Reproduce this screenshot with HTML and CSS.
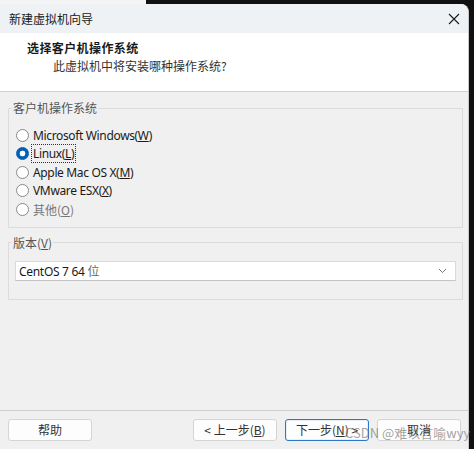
FILE: index.html
```html
<!DOCTYPE html>
<html>
<head>
<meta charset="utf-8">
<link rel="stylesheet" href="styles.css">
</head>
<body>
<div class="backdrop"></div>
<div class="window">
  <div class="titlebar">
    <span class="title">新建虚拟机向导</span>
    <svg class="close" width="12" height="12" viewBox="0 0 12 12"><path d="M1 1L11 11M11 1L1 11" stroke="#1a1a1a" stroke-width="1.1" fill="none"/></svg>
  </div>
  <div class="header">
    <div class="h-title">选择客户机操作系统</div>
    <div class="h-sub">此虚拟机中将安装哪种操作系统?</div>
  </div>
  <div class="body">
    <fieldset class="group os-group">
      <legend class="legend">客户机操作系统</legend>
      <div class="radios">
        <div class="radio"><span class="dot"></span><span class="lbl">Microsoft Windows(<u>W</u>)</span></div>
        <div class="radio"><span class="dot on"></span><span class="lbl focus">Linux(<u>L</u>)</span></div>
        <div class="radio"><span class="dot"></span><span class="lbl">Apple Mac OS X(<u>M</u>)</span></div>
        <div class="radio"><span class="dot"></span><span class="lbl">VMware ESX(<u>X</u>)</span></div>
        <div class="radio"><span class="dot"></span><span class="lbl cjk">其他(<u>O</u>)</span></div>
      </div>
    </fieldset>
    <fieldset class="group ver-group">
      <legend class="legend">版本(<u>V</u>)</legend>
      <div class="select">
        <span class="sel-text">CentOS 7 64 <span class="cjk">位</span></span>
        <svg class="chev" width="9" height="6" viewBox="0 0 9 6"><path d="M1 1L4.5 4.5L8 1" stroke="#777" stroke-width="1" fill="none"/></svg>
      </div>
    </fieldset>
    <div class="spacer"></div>
    <div class="footer">
      <button class="btn">帮助</button>
      <div class="nav">
        <button class="btn">&lt; 上一步(<u>B</u>)</button>
        <button class="btn primary">下一步(<u>N</u>) &gt;</button>
        <button class="btn">取消</button>
      </div>
    </div>
  </div>
</div>
<div class="watermark">CSDN @难以言喻wyy</div>
</body>
</html>
```
FILE: styles.css
```css
html, body {
  margin: 0;
  padding: 0;
  width: 474px;
  height: 449px;
  overflow: hidden;
  background: #111;
}
body {
  position: relative;
  font-family: "Noto Sans", "Noto Sans CJK SC", sans-serif;
  font-size: 12px;
  color: #1a1a1a;
}
.backdrop {
  position: absolute;
  left: 0;
  top: 0;
  width: 146px;
  height: 6px;
  background: #f4f4f4;
}
.window {
  position: relative;
  margin-top: 4px;
  width: 468px;
  height: 445px;
  background: #f0f0f0;
  border-top-right-radius: 8px;
  border-right: 1px solid #c8c8c8;
  overflow: hidden;
  display: flex;
  flex-direction: column;
}
.titlebar {
  height: 29px;
  background: #eef2f5;
  display: flex;
  align-items: center;
  justify-content: space-between;
  padding: 0 8px 0 9px;
  flex: none;
}
.title {
  font-family: "Noto Sans CJK SC", sans-serif;
  font-size: 12px;
  color: #1a1a1a;
  margin-top: -1px;
}
.close { margin-top: 1px; }
.header {
  height: 59px;
  background: #fff;
  border-bottom: 1px solid #cfcfcf;
  flex: none;
  box-sizing: border-box;
  padding: 5px 0 0 27px;
}
.h-title {
  font-family: "Noto Sans CJK SC", sans-serif;
  font-weight: bold;
  font-size: 12px;
  line-height: 20px;
  letter-spacing: 0.4px;
}
.h-sub {
  font-family: "Noto Sans CJK SC", sans-serif;
  font-size: 12px;
  line-height: 16px;
  margin-left: 26px;
  color: #333;
}
.body {
  flex: 1;
  display: flex;
  flex-direction: column;
  padding: 8px 0 0 0;
}
.group {
  margin: 0 5px 0 8px;
  border: 1px solid #dcdcdc;
  padding: 0;
  min-width: 0;
}
.legend {
  font-family: "Noto Sans CJK SC", sans-serif;
  color: #555;
  font-size: 12px;
  padding: 0 1px;
  margin-left: 3px;
  line-height: 16px;
}
.cjk { font-family: "Noto Sans CJK SC", sans-serif; }
.radios {
  display: flex;
  flex-direction: column;
  padding: 10px 0 8px 7px;
}
.radio {
  display: flex;
  align-items: center;
  height: 18.5px;
  gap: 2px;
}
.dot {
  width: 11px;
  height: 11px;
  border-radius: 50%;
  border: 1px solid #8a8a8a;
  background: #fff;
  box-sizing: content-box;
  flex: none;
}
.dot.on {
  border: 1px solid #005fb8;
  background: radial-gradient(circle, #fff 0 2.6px, #005fb8 3.2px);
}
.lbl {
  line-height: 17px;
  padding: 0 1px;
  border: 1px solid transparent;
  letter-spacing: -0.35px;
}
.lbl.focus { border: 1px dotted #333; }
.lbl.cjk { color: #777; letter-spacing: 0; }
.ver-group {
  margin-top: 7px;
  padding-bottom: 18px;
}
.select {
  margin: 10px 6px 0 6px;
  height: 18px;
  background: #fff;
  border: 1px solid #dadada;
  border-bottom-color: #c4c4c4;
  display: flex;
  align-items: center;
  justify-content: space-between;
  padding: 0 8px 0 3px;
}
.sel-text { letter-spacing: -0.3px; }
.sel-text .cjk { color: #666; }
.spacer { flex: 1; }
.footer {
  border-top: 1px solid #cfcfcf;
  height: 39px;
  box-sizing: border-box;
  display: flex;
  justify-content: space-between;
  padding: 8px 7px 0 8px;
}
.nav { display: flex; gap: 8px; }
.btn {
  width: 84px;
  height: 22px;
  background: #fdfdfd;
  border: 1px solid #d4d4d4;
  border-radius: 3px;
  font-family: "Noto Sans CJK SC", "Noto Sans", sans-serif;
  font-size: 12px;
  color: #333;
  padding: 0;
  line-height: 18px;
}
.btn.primary {
  border: 1px solid #2b78c6;
  box-shadow: inset 0 0 0 1px #e6eef8;
}
.watermark {
  position: absolute;
  left: 345px;
  top: 424px;
  z-index: 2;
  font-family: "Noto Sans CJK SC", sans-serif;
  font-size: 13px;
  line-height: 18px;
  color: rgba(110,110,110,0.65);
  white-space: nowrap;
}
```
